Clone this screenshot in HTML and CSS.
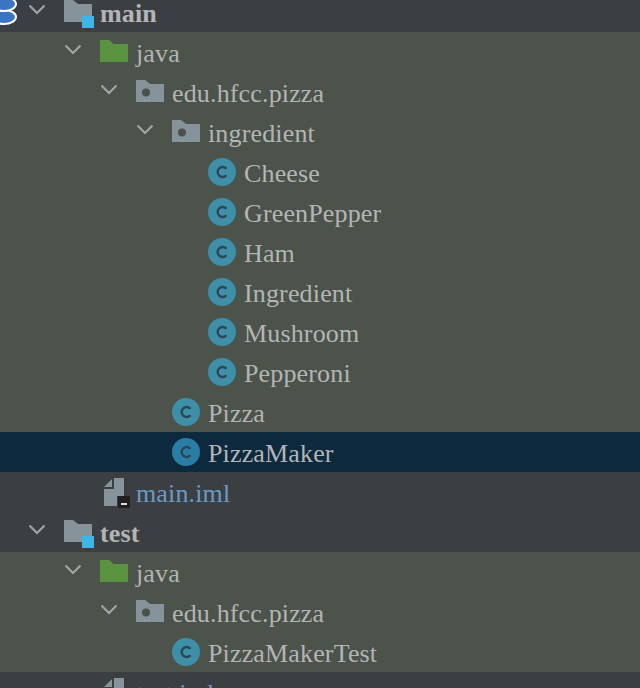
FILE: index.html
```html
<!DOCTYPE html>
<html lang="en">
<head>
    <meta charset="UTF-8">
    <title>Project tree</title>
    <link rel="stylesheet" href="styles.css">
</head>
<body>
    <svg class="defs" width="0" height="0">
        <symbol id="chev" viewBox="0 0 18 12"><path d="M1.5 1.5 9 9l7.5-7.5" fill="none" stroke="#a4a7a9" stroke-width="2"/></symbol>
        <symbol id="src" viewBox="0 0 28 22"><path d="M0 0h9l5 4h14v18H0z" fill="#59933f"/></symbol>
        <symbol id="pkg" viewBox="0 0 28 22"><path d="M0 0h9l5 4h14v18H0z" fill="#87939a"/><circle cx="10" cy="12.5" r="4" fill="#4b534a"/></symbol>
        <symbol id="mod" viewBox="0 0 30 30"><path d="M0 0h9l5 4h14v12H18v6H0z" fill="#87939a"/><rect x="18" y="16" width="12" height="12" fill="#3db5e6"/></symbol>
        <symbol id="cls" viewBox="0 0 28 28"><circle cx="14" cy="14" r="14" fill="currentColor"/><path d="M18.5 10.8a5 5 0 1 0 0 6.4" fill="none" stroke="#2b4657" stroke-width="2.4"/></symbol>
        <symbol id="iml" viewBox="0 0 26 30"><path d="M0 9 8 1v8zM10 0h10v18h-7v10H0V11h10z" fill="#87939a"/><rect x="14" y="18" width="12" height="12" fill="#231f20"/><rect x="17" y="25" width="6" height="2" fill="#ddd"/></symbol>
    </svg>
    <div class="stack">
        <span class="disc"></span>
        <span class="disc"></span>
    </div>
    <div class="tree">
        <div class="row d0 dark"><svg class="chev"><use href="#chev"/></svg><svg class="ico mod"><use href="#mod"/></svg><b>main</b></div>
        <div class="row d1"><svg class="chev"><use href="#chev"/></svg><svg class="ico"><use href="#src"/></svg>java</div>
        <div class="row d2"><svg class="chev"><use href="#chev"/></svg><svg class="ico"><use href="#pkg"/></svg>edu.hfcc.pizza</div>
        <div class="row d3"><svg class="chev"><use href="#chev"/></svg><svg class="ico"><use href="#pkg"/></svg>ingredient</div>
        <div class="row d5"><svg class="ico cls"><use href="#cls"/></svg>Cheese</div>
        <div class="row d5"><svg class="ico cls"><use href="#cls"/></svg>GreenPepper</div>
        <div class="row d5"><svg class="ico cls"><use href="#cls"/></svg>Ham</div>
        <div class="row d5"><svg class="ico cls"><use href="#cls"/></svg>Ingredient</div>
        <div class="row d5"><svg class="ico cls"><use href="#cls"/></svg>Mushroom</div>
        <div class="row d5"><svg class="ico cls"><use href="#cls"/></svg>Pepperoni</div>
        <div class="row d4"><svg class="ico cls"><use href="#cls"/></svg>Pizza</div>
        <div class="row d4 selected"><svg class="ico cls"><use href="#cls"/></svg>PizzaMaker</div>
        <div class="row d2 dark file"><svg class="ico iml"><use href="#iml"/></svg>main.iml</div>
        <div class="row d0 dark"><svg class="chev"><use href="#chev"/></svg><svg class="ico mod"><use href="#mod"/></svg><b>test</b></div>
        <div class="row d1"><svg class="chev"><use href="#chev"/></svg><svg class="ico"><use href="#src"/></svg>java</div>
        <div class="row d2"><svg class="chev"><use href="#chev"/></svg><svg class="ico"><use href="#pkg"/></svg>edu.hfcc.pizza</div>
        <div class="row d4"><svg class="ico cls"><use href="#cls"/></svg>PizzaMakerTest</div>
        <div class="row d2 dark file"><svg class="ico iml"><use href="#iml"/></svg>test.iml</div>
    </div>
</body>
</html>
```

FILE: styles.css
```css
*{margin:0; padding:0; box-sizing:border-box;}
html,body{
    height: 100%;
    overflow: hidden;
    background: #3c3f41;
}
.defs{
    display: block;
    height: 0;
}
.tree{
    margin-top: -8px;
    font-family: "Liberation Serif", serif;
    font-size: 26px;
    letter-spacing: .15px;
    color: #b3b5b6;
}
.row{
    display: flex;
    align-items: center;
    height: 40px;
    padding-top: 4px;
    background: #4b534a;
    white-space: nowrap;
}
.row.dark{
    background: #3c3f41;
}
.row.selected{
    background: #0d293e;
}
.row.selected .cls{
    color: #2a7ea6;
}
.row.file{
    color: #6a9bc8;
}
.d0{padding-left: 28px;}
.d1{padding-left: 64px;}
.d2{padding-left: 100px;}
.d3{padding-left: 136px;}
.d4{padding-left: 172px;}
.d5{padding-left: 208px;}
.chev{
    flex: none;
    width: 18px;
    height: 12px;
    margin-right: 18px;
    margin-bottom: 8px;
}
.ico{
    flex: none;
    width: 28px;
    height: 22px;
    margin-right: 8px;
    margin-bottom: 6px;
}
.mod{
    width: 30px;
    height: 30px;
    margin-right: 6px;
    margin-top: 2px;
    margin-bottom: 0;
}
.cls{
    height: 28px;
    color: #3f8fa9;
    margin-bottom: 4px;
}
.iml{
    width: 26px;
    height: 30px;
    margin-left: 4px;
    margin-right: 6px;
    margin-bottom: 2px;
}
.stack{
    position: absolute;
    left: -9px;
    top: -4px;
    z-index: 1;
}
.disc{
    display: block;
    width: 26px;
    height: 16px;
    margin-bottom: -3px;
    border: 2px solid #fff;
    border-radius: 50%;
    background: #3a75c4;
}
.disc:first-child{
    position: relative;
    z-index: 1;
}
```
